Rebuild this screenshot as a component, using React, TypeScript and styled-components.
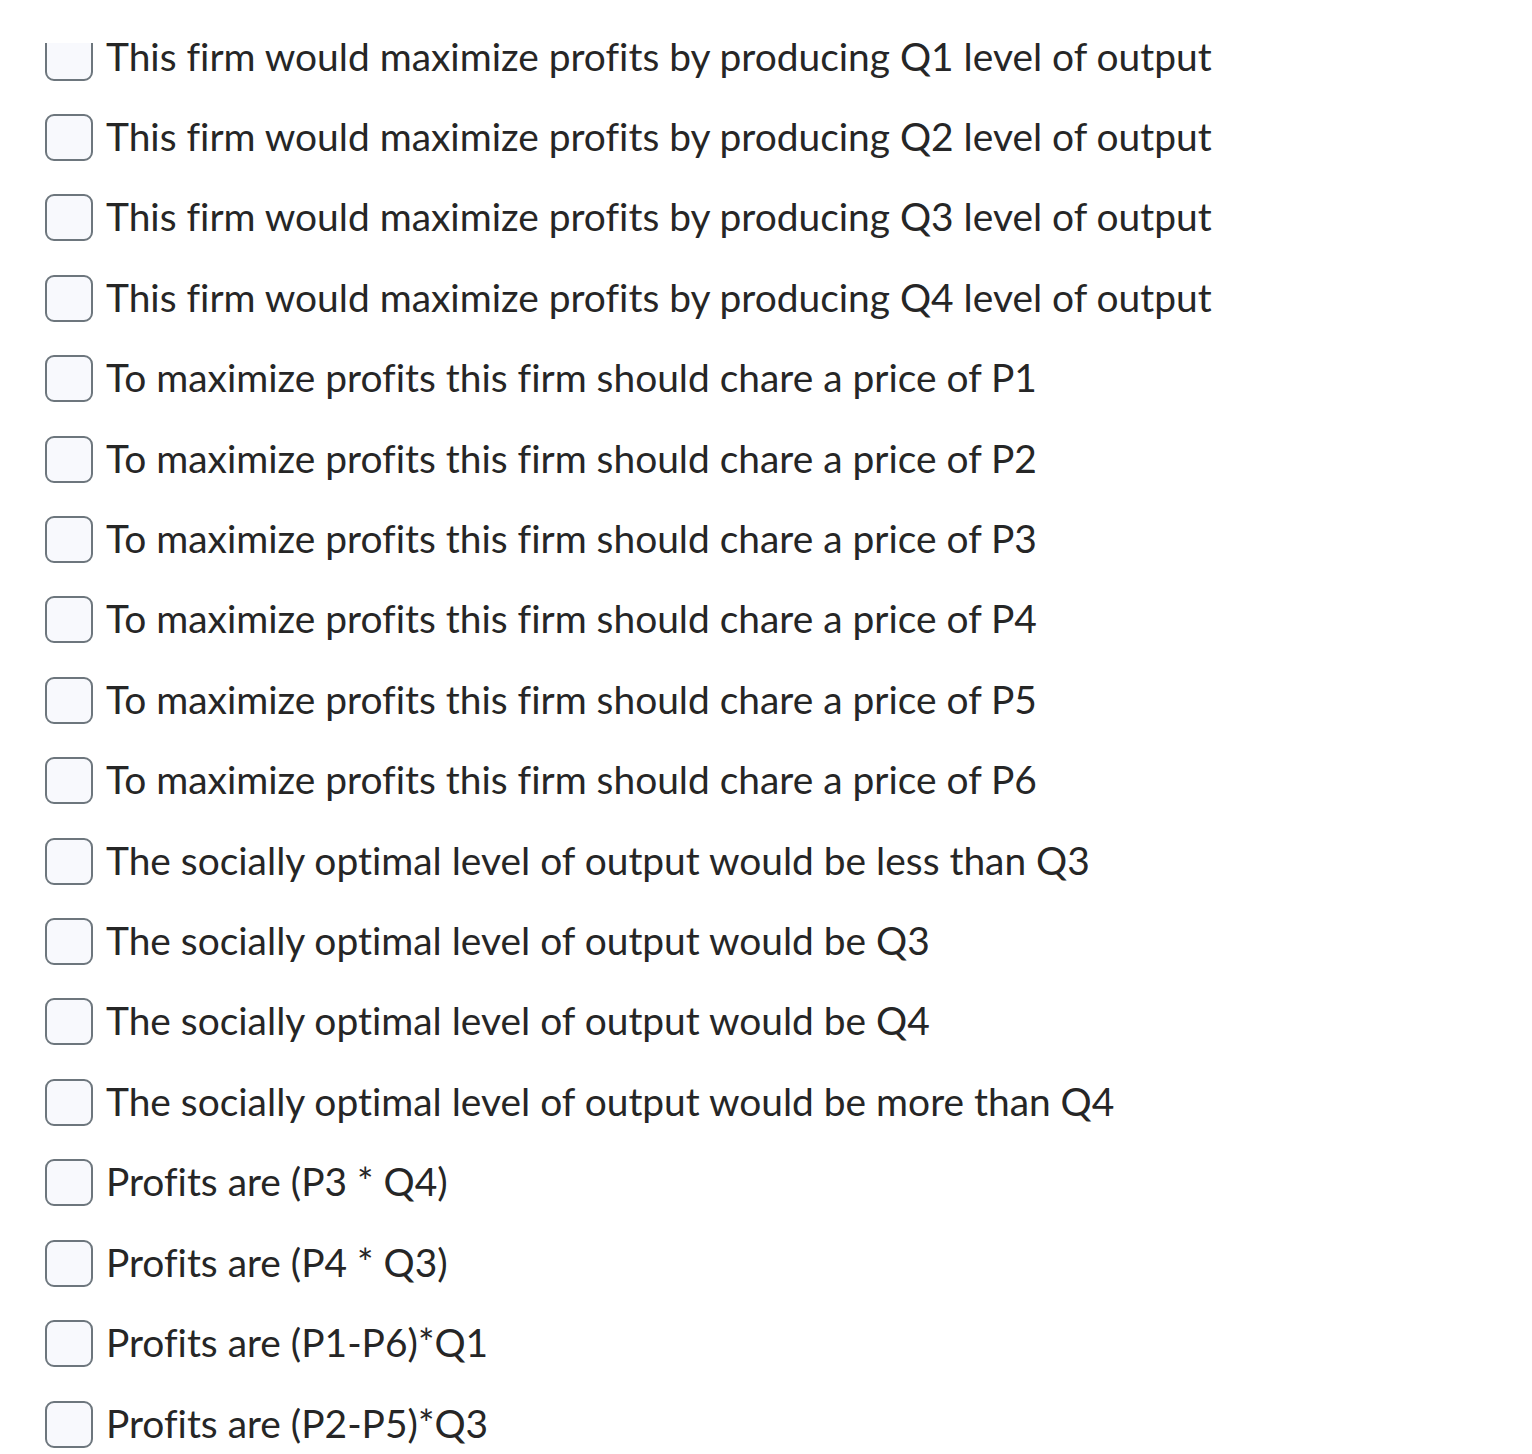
import React from "react";
import styled, { createGlobalStyle } from "styled-components";

const Global = createGlobalStyle`
  html, body { margin: 0; padding: 0; background: #ffffff; }
  body { font-family: Lato, "Open Sans", sans-serif; color: #262626; }
`;

const Viewport = styled.div`
  margin-top: 43.3px;
  overflow: hidden;
  padding-left: 45px;
`;

const List = styled.ul`
  list-style: none;
  margin: -9.7px 0 0 0;
  padding: 0;
  display: flex;
  flex-direction: column;
`;

const Row = styled.li`
  height: 80.42px;
  display: flex;
  align-items: flex-start;
  gap: 13px;
`;

const Box = styled.span`
  flex: 0 0 auto;
  box-sizing: border-box;
  width: 48px;
  height: 47px;
  border: 2px solid #6d767d;
  border-radius: 9px;
  background: #f8f9fd;
`;

const Label = styled.span`
  font-family: Lato, sans-serif;
  font-size: 38.9px;
  line-height: 45px;
  color: #262626;
  white-space: nowrap;
  font-variant-ligatures: none;
  font-feature-settings: "liga" 0, "clig" 0;
`;

const items = [
  "This firm would maximize profits by producing Q1 level of output",
  "This firm would maximize profits by producing Q2 level of output",
  "This firm would maximize profits by producing Q3 level of output",
  "This firm would maximize profits by producing Q4 level of output",
  "To maximize profits this firm should chare a price of P1",
  "To maximize profits this firm should chare a price of P2",
  "To maximize profits this firm should chare a price of P3",
  "To maximize profits this firm should chare a price of P4",
  "To maximize profits this firm should chare a price of P5",
  "To maximize profits this firm should chare a price of P6",
  "The socially optimal level of output would be less than Q3",
  "The socially optimal level of output would be Q3",
  "The socially optimal level of output would be Q4",
  "The socially optimal level of output would be more than Q4",
  "Profits are (P3 * Q4)",
  "Profits are (P4 * Q3)",
  "Profits are (P1-P6)*Q1",
  "Profits are (P2-P5)*Q3",
];

export default function App() {
  return (
    <>
      <Global />
      <Viewport>
        <List>
          {items.map((t) => (
            <Row key={t}>
              <Box />
              <Label>{t}</Label>
            </Row>
          ))}
        </List>
      </Viewport>
    </>
  );
}
